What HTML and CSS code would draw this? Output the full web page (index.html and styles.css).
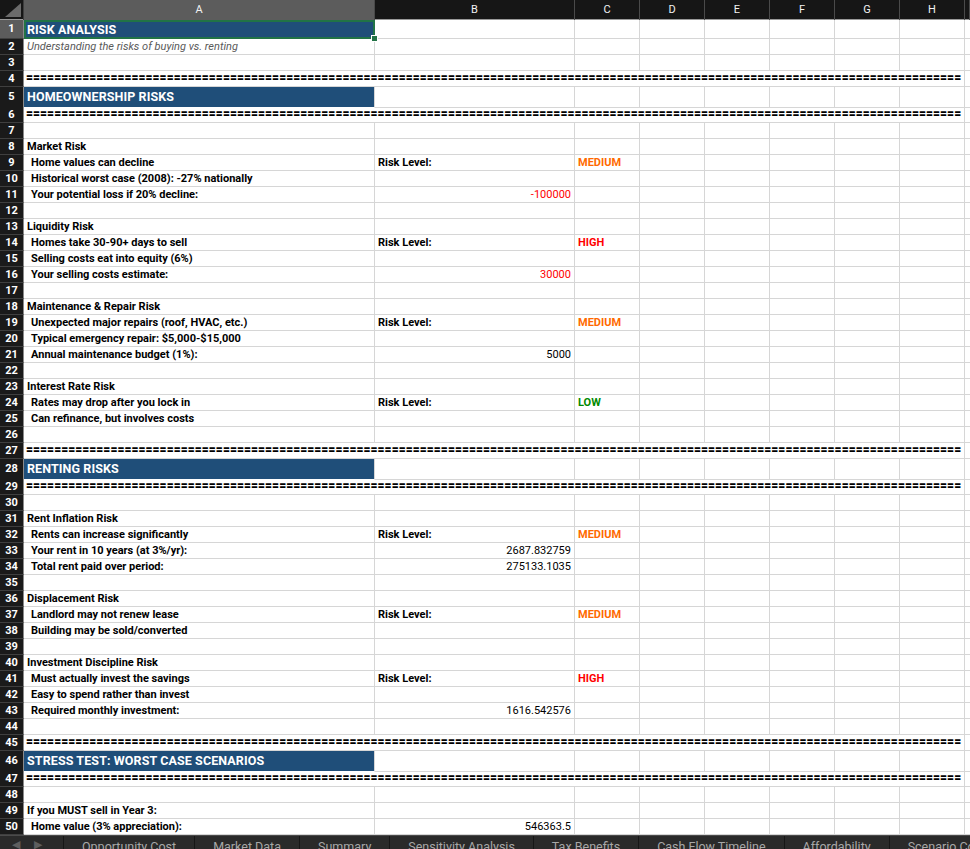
FILE: index.html
```html
<!DOCTYPE html>
<html lang="en">
<head>
    <meta charset="UTF-8" />
    <meta name="viewport" content="width=device-width, initial-scale=1.0" />
    <title>Risk Analysis</title>
    <link rel="stylesheet" href="styles.css">
</head>
<body>
    <div class="sheet">
        <div class="colheads">
            <div class="corner">
                <svg width="24" height="20" viewBox="0 0 24 20"><polygon points="5,17 21,17 21,3" fill="#6b6b6b"/></svg>
            </div>
            <div class="ch active">A</div>
            <div class="ch">B</div>
            <div class="ch">C</div>
            <div class="ch">D</div>
            <div class="ch">E</div>
            <div class="ch">F</div>
            <div class="ch">G</div>
            <div class="ch">H</div>
            <div class="ch"></div>
        </div>
        <div id="rows"></div>
    </div>

    <div class="tabs">
        <div class="nav"><span>&#9664;</span><span>&#9654;</span></div>
        <div class="tab">Opportunity Cost</div>
        <div class="tab">Market Data</div>
        <div class="tab">Summary</div>
        <div class="tab">Sensitivity Analysis</div>
        <div class="tab">Tax Benefits</div>
        <div class="tab">Cash Flow Timeline</div>
        <div class="tab">Affordability</div>
        <div class="tab">Scenario Comparison</div>
    </div>

    <script>
        // type, column A, column B, column C, number colour
        const rows = [
            ['title', 'RISK ANALYSIS'],
            ['sub', 'Understanding the risks of buying vs. renting'],
            ['blank'],
            ['rule'],
            ['band', 'HOMEOWNERSHIP RISKS'],
            ['rule'],
            ['blank'],
            ['group', 'Market Risk'],
            ['item', 'Home values can decline', 'Risk Level:', 'MEDIUM'],
            ['item', 'Historical worst case (2008): -27% nationally'],
            ['item', 'Your potential loss if 20% decline:', '-100000', '', 'red'],
            ['blank'],
            ['group', 'Liquidity Risk'],
            ['item', 'Homes take 30-90+ days to sell', 'Risk Level:', 'HIGH'],
            ['item', 'Selling costs eat into equity (6%)'],
            ['item', 'Your selling costs estimate:', '30000', '', 'red'],
            ['blank'],
            ['group', 'Maintenance & Repair Risk'],
            ['item', 'Unexpected major repairs (roof, HVAC, etc.)', 'Risk Level:', 'MEDIUM'],
            ['item', 'Typical emergency repair: $5,000-$15,000'],
            ['item', 'Annual maintenance budget (1%):', '5000'],
            ['blank'],
            ['group', 'Interest Rate Risk'],
            ['item', 'Rates may drop after you lock in', 'Risk Level:', 'LOW'],
            ['item', 'Can refinance, but involves costs'],
            ['blank'],
            ['rule'],
            ['band', 'RENTING RISKS'],
            ['rule'],
            ['blank'],
            ['group', 'Rent Inflation Risk'],
            ['item', 'Rents can increase significantly', 'Risk Level:', 'MEDIUM'],
            ['item', 'Your rent in 10 years (at 3%/yr):', '2687.832759'],
            ['item', 'Total rent paid over period:', '275133.1035'],
            ['blank'],
            ['group', 'Displacement Risk'],
            ['item', 'Landlord may not renew lease', 'Risk Level:', 'MEDIUM'],
            ['item', 'Building may be sold/converted'],
            ['blank'],
            ['group', 'Investment Discipline Risk'],
            ['item', 'Must actually invest the savings', 'Risk Level:', 'HIGH'],
            ['item', 'Easy to spend rather than invest'],
            ['item', 'Required monthly investment:', '1616.542576'],
            ['blank'],
            ['rule'],
            ['band', 'STRESS TEST: WORST CASE SCENARIOS'],
            ['rule'],
            ['blank'],
            ['group', 'If you MUST sell in Year 3:'],
            ['item', 'Home value (3% appreciation):', '546363.5']
        ];

        function cell(cls, text) {
            let d = document.createElement('div');
            d.className = 'cell ' + cls;
            d.textContent = text || '';
            return d;
        }

        let container = document.getElementById('rows');
        let ruleCells = [];
        rows.forEach((r, i) => {
            let [type, a, b, c, color] = r;
            let row = document.createElement('div');
            row.className = 'row ' + type;

            let rh = document.createElement('div');
            rh.className = 'rh' + (i === 0 ? ' active' : '');
            rh.textContent = i + 1;
            row.appendChild(rh);

            if (type === 'rule') {
                let rc = cell('rule', '');
                ruleCells.push(rc);
                row.appendChild(rc);
                row.appendChild(cell('', ''));
            } else {
                row.appendChild(cell('a ' + type, a));
                if (b === 'Risk Level:') {
                    row.appendChild(cell('label', b));
                } else {
                    row.appendChild(cell('num' + (color ? ' ' + color : ''), b));
                }
                row.appendChild(cell('risk' + (c ? ' ' + c.toLowerCase() : ''), c));
                for (let k = 0; k < 6; k++) row.appendChild(cell('', ''));
            }
            container.appendChild(row);
        });

        // fill the separator rows with as many "=" as fit
        ruleCells.forEach(rc => {
            let probe = document.createElement('span');
            probe.textContent = '='.repeat(50);
            rc.appendChild(probe);
            let charW = probe.getBoundingClientRect().width / 50;
            let n = Math.floor((rc.clientWidth - 4) / charW);
            probe.textContent = '='.repeat(n);
        });
    </script>
</body>
</html>
```

FILE: styles.css
```css
* {
    box-sizing: border-box;
}

html, body {
    margin: 0;
    padding: 0;
    height: 100%;
    overflow: hidden;
}

body {
    font-family: Roboto, 'Liberation Sans', sans-serif;
    font-size: 11px;
    color: #000;
    background: #fff;
}

.colheads,
.row {
    display: grid;
    grid-template-columns: 24px 351px 200px repeat(6, 65px) 1fr;
}

/* column headers */
.colheads {
    height: 20px;
    background: #161616;
    border-bottom: 1px solid #9a9a9a;
}

.corner {
    border-right: 1px solid #3d3d3d;
}

    .corner svg {
        display: block;
    }

.ch {
    color: #f2f2f2;
    text-align: center;
    line-height: 19px;
    font-size: 11px;
    border-right: 1px solid #4a4a4a;
}

    .ch.active {
        background: #5c5c5c;
    }

/* rows */
.row {
    height: 16px;
}

    .row.title {
        height: 19px;
    }

    .row.band {
        height: 20px;
    }

.rh {
    background: #1a1a1a;
    color: #fff;
    font-weight: bold;
    font-size: 11px;
    text-align: center;
    line-height: 15px;
    border-bottom: 1px solid #3f3f3f;
    border-right: 1px solid #8a8a8a;
}

    .rh.active {
        background: #5c5c5c;
    }

.band .rh {
    line-height: 19px;
}

.title .rh {
    line-height: 18px;
}

.cell {
    border-right: 1px solid #d6d6d6;
    border-bottom: 1px solid #d6d6d6;
    padding: 0 3px;
    line-height: 15px;
    white-space: nowrap;
}

.a {
    font-weight: bold;
}

    .a.item {
        padding-left: 7px;
    }

    .a.sub {
        font-weight: normal;
        font-style: italic;
        color: #595959;
    }

    .a.title,
    .a.band {
        background: #1f4e79;
        color: #fff;
        font-size: 12.5px;
        letter-spacing: 0.1px;
    }

    .a.band {
        line-height: 20px;
        border-bottom-color: #fff;
    }

    .a.title {
        position: relative;
        line-height: 15px;
        border: 2px solid #217346;
        padding-left: 1px;
    }

        .a.title::after {
            content: '';
            position: absolute;
            right: -5px;
            bottom: -5px;
            width: 5px;
            height: 5px;
            background: #217346;
            border: 1px solid #fff;
        }

.label {
    font-weight: bold;
}

.num {
    text-align: right;
}

    .num.red {
        color: #ff0000;
    }

.risk {
    font-weight: bold;
}

    .risk.medium {
        color: #ff6a00;
    }

    .risk.high {
        color: #ff0000;
    }

    .risk.low {
        color: #008a00;
    }

.cell.rule {
    grid-column: 2 / 10;
    overflow: hidden;
    font-weight: 900;
    font-size: 12px;
    padding-left: 2px;
    line-height: 14px;
}

/* sheet tabs */
.tabs {
    display: flex;
    height: 30px;
    background: #2a2a2a;
    border-top: 1px solid #4a4a4a;
    color: #a8a8a8;
    font-size: 12.5px;
    white-space: nowrap;
    overflow: hidden;
}

.nav {
    width: 63px;
    flex-shrink: 0;
    display: flex;
    gap: 14px;
    padding: 2px 0 0 12px;
    color: #5e5e5e;
    font-size: 11px;
}

.tab {
    flex-shrink: 0;
    padding: 3px 18px 0;
    border-left: 1px solid #161616;
}
```
